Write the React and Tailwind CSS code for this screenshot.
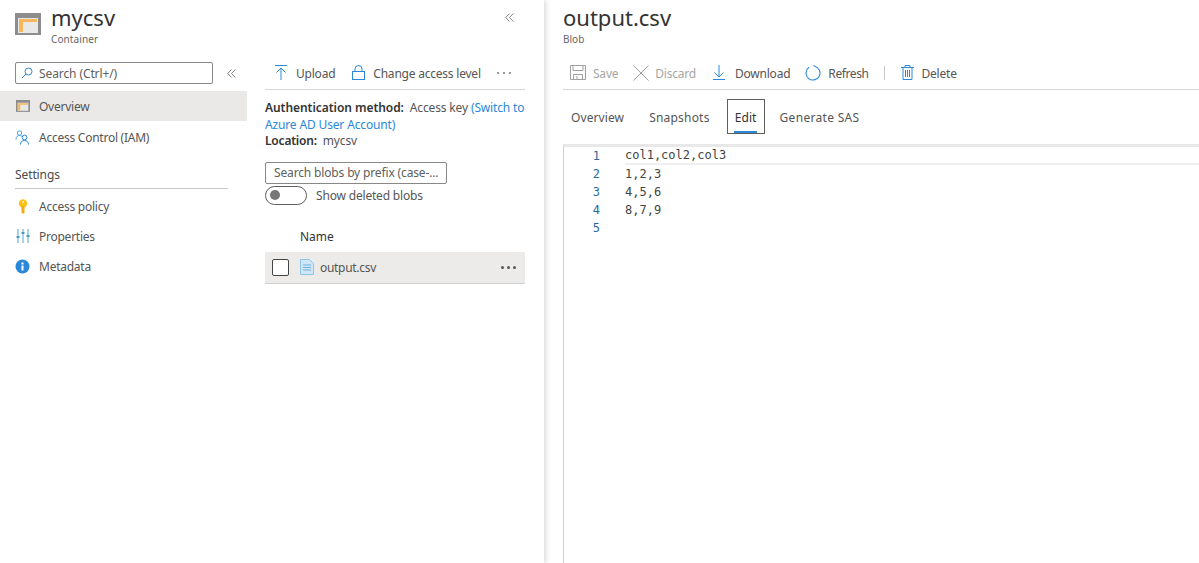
import React from "react";

const BLUE = "#2b88d8";

function ContainerIcon({ s = 24 }) {
  return (
    <svg width={s} height={s * 0.85} viewBox="0 0 26 22">
      <rect width="26" height="22" fill="#8c8c8c" />
      <rect x="3" y="5" width="20" height="15" fill="#e8e8e8" />
      <path d="M4 6h18v3H8v10H4z" fill="#f5b65c" />
    </svg>
  );
}

function IamIcon() {
  return (
    <svg width="15" height="15" viewBox="0 0 15 15" fill="none" stroke="#4aa3dc" strokeWidth="1">
      <circle cx="4.500" cy="3" r="2.200" />
      <path d="M1 9.500c0-2.600 1.600-4 3.500-4 1 0 1.800.3 2.400.9" />
      <circle cx="9.500" cy="7.500" r="2.400" stroke={BLUE} />
      <path d="M5.500 14.500c0-2.700 1.800-4 4-4s4 1.300 4 4" stroke={BLUE} />
    </svg>
  );
}

function KeyIcon() {
  return (
    <svg width="12" height="15" viewBox="0 0 12 15">
      <circle cx="6" cy="4.500" r="4.200" fill="#fcc21b" />
      <rect x="4.500" y="7" width="3" height="7.500" rx="1" fill="#f0ad12" />
      <circle cx="6" cy="3" r="1" fill="#fff2c0" />
    </svg>
  );
}

function PropsIcon() {
  return (
    <svg width="14" height="14" viewBox="0 0 14 14" stroke="#8cc4de" strokeWidth="1.500">
      <path d="M2 0v14M7 0v14M12 0v14" />
      <path d="M.5 8h3M5.500 4h3M10.500 7h3" stroke="#4b98bd" strokeWidth="2" />
    </svg>
  );
}

function InfoIcon() {
  return (
    <svg width="15" height="15" viewBox="0 0 15 15">
      <circle cx="7.500" cy="7.500" r="7" fill={BLUE} />
      <rect x="6.500" y="6.500" width="2" height="5" fill="#fff" />
      <rect x="6.500" y="3.500" width="2" height="2" fill="#fff" />
    </svg>
  );
}

function MenuItem({ icon, label, active }) {
  return (
    <div className={`flex h-[30px] items-center gap-[9px] pl-[15px] ${active ? "bg-[#ebe9e8]" : ""}`}>
      <span className="flex w-[15px] justify-center">{icon}</span>
      <span className="pt-[2px] text-[12px] tracking-[-0.25px] text-[#555]">{label}</span>
    </div>
  );
}

function ToolButton({ icon, label, muted, gap = "gap-2", tight }) {
  return (
    <div className={`flex items-center ${gap}`}>
      {icon}
      <span className={`pt-[2px] text-[12px] ${tight ? "tracking-[-0.4px]" : "tracking-[-0.22px]"} ${muted ? "text-[#a6a6a6]" : "text-[#555]"}`}>{label}</span>
    </div>
  );
}

function Chevrons() {
  return (
    <svg width="9" height="9" viewBox="0 0 9 9" fill="none" stroke="#777" strokeWidth="0.900">
      <path d="M4.500.5L.7 4.500l3.800 4M8.300.5L4.500 4.500l3.800 4" />
    </svg>
  );
}

export default function App() {
  return (
    <div className="flex h-[563px] w-[1199px] overflow-hidden bg-white font-['Noto_Sans',sans-serif] text-[#333]">
      {/* Left blade */}
      <div className="flex h-full w-[544px] shrink-0 flex-col shadow-[2px_0_5px_rgba(0,0,0,0.14)]">
        <div className="flex h-[62px] shrink-0">
          <div className="flex w-[247px] items-start pl-[15px] pt-[13px]">
            <ContainerIcon s={26} />
            <div className="ml-[10px] -mt-[11px]">
              <div className="text-[22px] leading-[30px] text-[#333]">mycsv</div>
              <div className="text-[10px] leading-[14px] tracking-[0.1px] text-[#666]">Container</div>
            </div>
          </div>
          <div className="flex flex-1 justify-end pr-[30px] pt-[13px]"><Chevrons /></div>
        </div>
        <div className="flex min-h-0 flex-1">
          <div className="w-[247px] shrink-0">
            <div className="flex items-center pl-[15px]">
              <div className="flex h-[22px] w-[198px] items-center gap-[6px] rounded-[2px] border border-[#8a8886] px-[5px]">
                <svg width="12" height="12" viewBox="0 0 12 12" fill="none" stroke={BLUE} strokeWidth="1">
                  <circle cx="7.500" cy="4.500" r="3.500" />
                  <path d="M5 7L1 11" />
                </svg>
                <span className="pt-[1px] text-[12px] tracking-[-0.1px] text-[#605e5c]">Search (Ctrl+/)</span>
              </div>
              <div className="ml-[14px] flex"><Chevrons /></div>
            </div>
            <div className="mt-[7px]">
              <MenuItem active icon={<ContainerIcon s={14} />} label="Overview" />
              <div className="h-px" />
              <MenuItem icon={<IamIcon />} label="Access Control (IAM)" />
            </div>
            <div className="mx-[15px] mt-[13px] h-[24px] w-[213px] border-b border-[#c8c6c4] pt-[1px] text-[12px] leading-[18px] tracking-[-0.1px] text-[#4a4a4a]">
              Settings
            </div>
            <div className="mt-[2px]">
              <MenuItem icon={<KeyIcon />} label="Access policy" />
              <MenuItem icon={<PropsIcon />} label="Properties" />
              <MenuItem icon={<InfoIcon />} label="Metadata" />
            </div>
          </div>
          <div className="box-content w-[260px] shrink-0 pl-[18px]">
            <div className="flex h-[28px] w-[260px] items-center border-b border-[#d6d6d6] pb-[6px] pl-[10px]">
              <ToolButton
                gap="gap-[9px]"
                icon={
                  <svg width="12" height="15" viewBox="0 0 12 15" fill="none" stroke={BLUE} strokeWidth="1">
                    <path d="M0 .5h12M6 15V3M1.500 7.500L6 3l4.500 4.500" />
                  </svg>
                }
                label="Upload"
              />
              <div className="ml-[17px]">
                <ToolButton
                  gap="gap-[8px]"
                  icon={
                    <svg width="13" height="15" viewBox="0 0 13 15" fill="none" stroke={BLUE} strokeWidth="1">
                      <rect x=".5" y="6.500" width="12" height="8" />
                      <path d="M3 6.500V4a3.500 3.500 0 017 0v2.500" />
                    </svg>
                  }
                  label="Change access level"
                />
              </div>
              <span className="ml-[16px] flex gap-[4px]">
                <i className="h-[2px] w-[2px] rounded-full bg-[#777]" />
                <i className="h-[2px] w-[2px] rounded-full bg-[#777]" />
                <i className="h-[2px] w-[2px] rounded-full bg-[#777]" />
              </span>
            </div>
            <div className="mt-[10px] text-[12px] leading-[16.5px] tracking-[-0.15px] text-[#555]">
              <div className="whitespace-nowrap">
                <b className="font-semibold tracking-[-0.05px] text-[#333]">Authentication method:</b>&nbsp; Access key{" "}
                <span className="text-[#2b88d8]">(Switch to</span>
              </div>
              <div className="text-[#2b88d8]">Azure AD User Account)</div>
              <div>
                <b className="font-semibold tracking-[-0.2px] text-[#333]">Location:</b>&nbsp; mycsv
              </div>
            </div>
            <div className="mt-[12px] flex h-[22px] w-[182px] items-center rounded-[2px] border border-[#8a8886] pl-[8px] pt-[1px] text-[12px] tracking-[-0.15px] text-[#605e5c]">
              Search blobs by prefix (case-...
            </div>
            <div className="mt-[2px] flex h-[19px] items-center">
              <div className="flex h-[19px] w-[42px] items-center rounded-full border border-[#605e5c] pl-[4px]">
                <div className="h-[10px] w-[10px] rounded-full bg-[#777]" />
              </div>
              <span className="ml-[9px] pt-[2px] text-[12px] tracking-[-0.18px] text-[#555]">Show deleted blobs</span>
            </div>
            <div className="mt-[23px] h-[24px] pl-[35px] text-[12px] leading-[18px] text-[#333]">Name</div>
            <div className="flex h-[32px] w-[260px] items-center border-b border-[#d0d0d0] bg-[#edebe9] pl-[7px] pr-[9px]">
              <div className="h-[17px] w-[17px] rounded-[2px] border border-[#444] bg-white" />
              <svg className="ml-[11px]" width="14" height="16" viewBox="0 0 14 16">
                <path d="M.5.5h9l4 4v11H.5z" fill="#cfe7f7" stroke="#8cc4e8" />
                <path d="M3 6h8M3 8.500h8M3 11h8" stroke="#6fb0dc" />
              </svg>
              <span className="ml-[6px] flex-1 pt-[1px] text-[12px] tracking-[-0.3px] text-[#555]">output.csv</span>
              <span className="flex gap-[3px]">
                <i className="h-[3px] w-[3px] rounded-full bg-[#555]" />
                <i className="h-[3px] w-[3px] rounded-full bg-[#555]" />
                <i className="h-[3px] w-[3px] rounded-full bg-[#555]" />
              </span>
            </div>
          </div>
        </div>
      </div>

      {/* Right blade */}
      <div className="flex min-w-0 flex-1 flex-col pl-[19px]">
        <div className="h-[62px] shrink-0 pt-[2px]">
          <div className="text-[22px] leading-[30px] text-[#333]">output.csv</div>
          <div className="text-[10px] leading-[14px] text-[#666]">Blob</div>
        </div>
        <div className="flex h-[28px] shrink-0 items-center border-b border-[#d6d6d6] pb-[6px] pl-[7px]">
          <ToolButton
            muted
            gap="gap-[7px]"
            icon={
              <svg width="16" height="15" viewBox="0 0 16 15" fill="none" stroke="#a0a0a0" strokeWidth="1">
                <path d="M.5.5h15v14H.5zM3 .5v5h10v-5M3.500 14.500V9.500h9v5M7 11v3" />
              </svg>
            }
            label="Save"
          />
          <div className="ml-[15px]">
            <ToolButton
              muted
              gap="gap-[6px]"
              icon={
                <svg width="16" height="16" viewBox="0 0 16 16" fill="none" stroke="#a0a0a0" strokeWidth="1">
                  <path d="M.5.5l15 15M15.500.5l-15 15" />
                </svg>
              }
              label="Discard"
            />
          </div>
          <div className="ml-[17px]">
            <ToolButton
              gap="gap-[10px]"
              icon={
                <svg width="12" height="15" viewBox="0 0 12 15" fill="none" stroke={BLUE} strokeWidth="1">
                  <path d="M0 14.500h12M6 0v12M1.500 7.500L6 12l4.500-4.500" />
                </svg>
              }
              label="Download"
            />
          </div>
          <div className="ml-[15px]">
            <ToolButton
              tight
              gap="gap-[7px]"
              icon={
                <svg width="16" height="16" viewBox="0 0 16 16" fill="none" stroke={BLUE} strokeWidth="1.100">
                  <path d="M4 2.300A7 7 0 1 0 9.500 1.200M9.500 1.200L8.500 0" />
                </svg>
              }
              label="Refresh"
            />
          </div>
          <div className="ml-[15px] h-[14px] w-px bg-[#c8c6c4]" />
          <div className="ml-[16px]">
            <ToolButton
              gap="gap-[8px]"
              icon={
                <svg width="13" height="15" viewBox="0 0 13 15" fill="none" stroke={BLUE} strokeWidth="1">
                  <path d="M0 2.500h13M4 2.500V.5h5v2M2 2.500v12h9v-12M4.500 5v7M6.500 5v7M8.500 5v7" />
                </svg>
              }
              label="Delete"
            />
          </div>
        </div>
        <div className="mt-[9px] flex h-[35px] shrink-0 items-center pl-[8px] text-[12px] tracking-[0.1px] text-[#555]">
          <span className="pt-[2px]">Overview</span>
          <span className="ml-[25px] pt-[2px] tracking-[0.2px]">Snapshots</span>
          <div className="relative ml-[17px] flex h-[35px] w-[38px] items-center justify-center border border-[#605e5c] pt-[2px] text-[#333]">
            Edit
            <div className="absolute bottom-0 left-[6px] h-[2px] w-[23px] bg-[#2b88d8]" />
          </div>
          <span className="ml-[15px] pt-[2px] tracking-[0.3px]">Generate SAS</span>
        </div>
        <div className="mt-[10px] min-h-0 flex-1 border-l border-t-[3px] border-[#e8e8e8] border-l-[#d0d0d0] font-['DejaVu_Sans_Mono',monospace] text-[12px] leading-[18px]">
          {["col1,col2,col3", "1,2,3", "4,5,6", "8,7,9", ""].map((line, i) => (
            <div key={i} className="flex h-[18px]">
              <span className="w-[36px] shrink-0 text-right text-[#2b6a9e]">{i + 1}</span>
              <span className={`ml-[25px] flex-1 whitespace-pre text-[#444] ${i === 0 ? "border-b-2 border-[#efefef] leading-[16px]" : ""}`}>
                {line}
              </span>
            </div>
          ))}
        </div>
      </div>
    </div>
  );
}
